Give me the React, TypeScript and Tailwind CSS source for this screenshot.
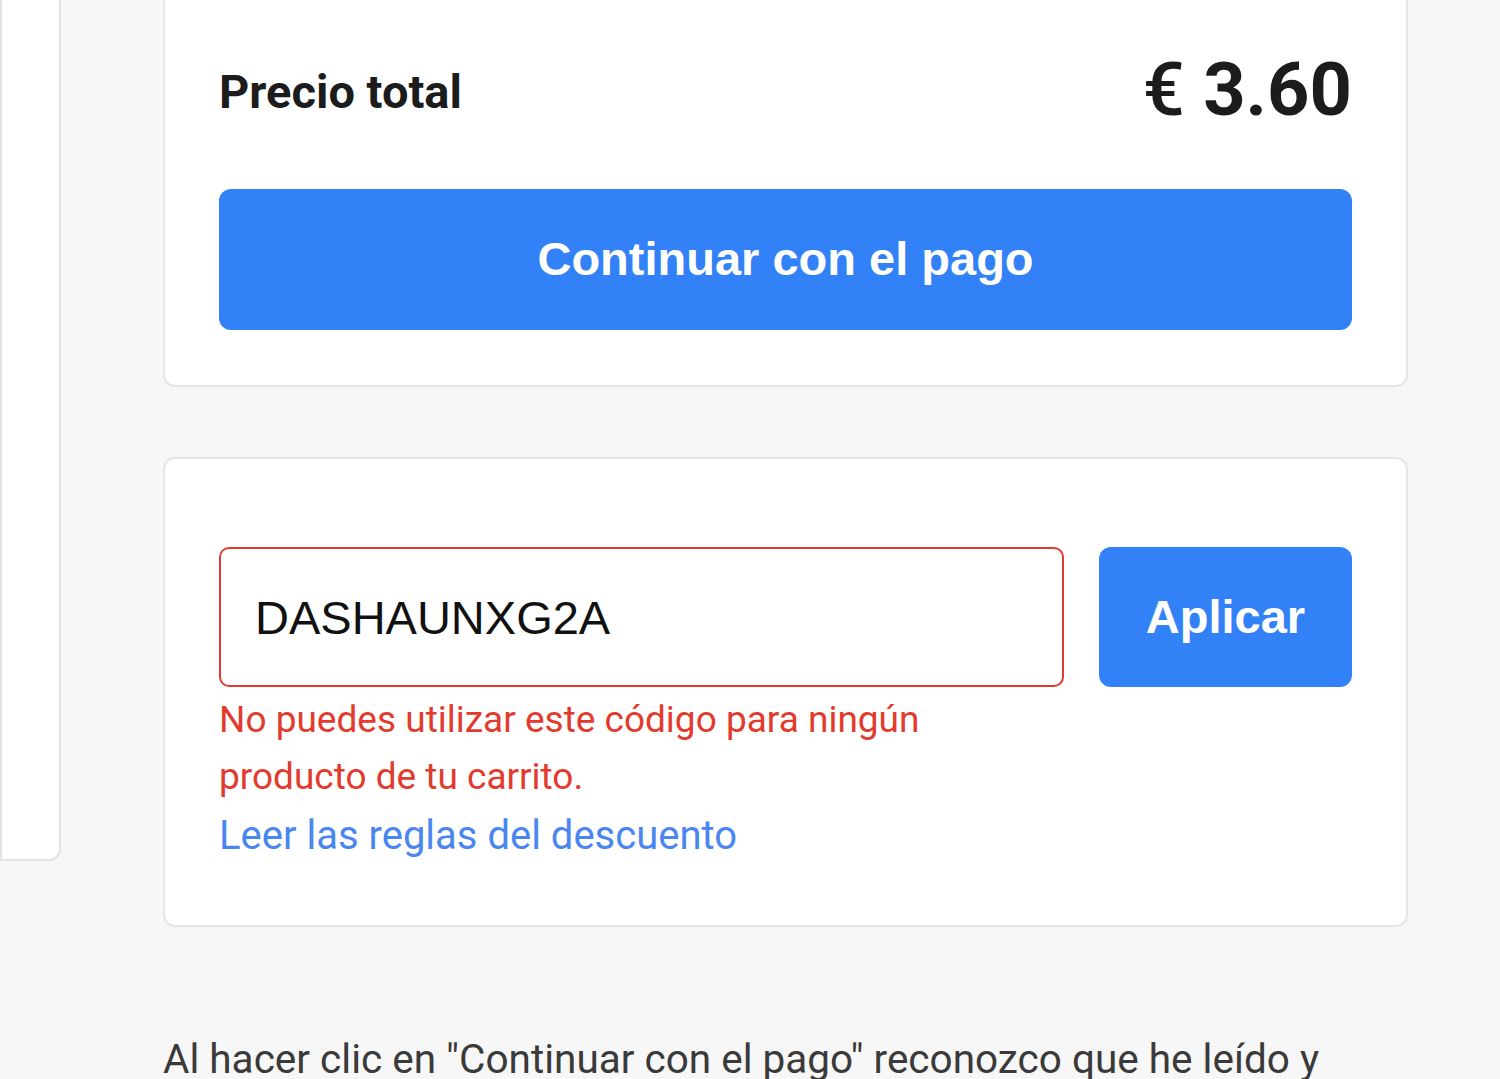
import { useState } from "react";

const roboto = "font-['Roboto','Noto_Sans',sans-serif]";
const arial = "font-['Liberation_Sans',Arial,sans-serif]";

export default function App() {
  const [code, setCode] = useState("DASHAUNXG2A");

  return (
    <div className="h-[1079px] w-[1500px] overflow-hidden bg-[#f7f7f7]">
      <div className="flex items-start">
        {/* left summary panel, mostly off-screen */}
        <div className="h-[861px] w-[61px] shrink-0 rounded-br-[12px] border-2 border-t-0 border-[#e4e4e4] bg-white" />

        <div className="ml-[102px] w-[1245px] shrink-0">
          {/* total */}
          <div className="rounded-b-[12px] border-2 border-t-0 border-[#e6e6e6] bg-white px-[54px] pb-[55px] pt-[50px]">
            <div className="flex h-[80px] items-center justify-between">
              <span className={`${roboto} pt-[4px] text-[47px] font-bold text-[#1c1c1c]`}>
                Precio total
              </span>
              <span className={`${roboto} text-[74px] font-bold leading-none text-[#1c1c1c]`}>
                <span className="font-medium">€</span> 3.60
              </span>
            </div>
            <button
              type="button"
              className={`${arial} mt-[59px] flex h-[141px] w-full items-center justify-center rounded-[12px] bg-[#3381f7] text-[47px] font-bold text-white`}
            >
              Continuar con el pago
            </button>
          </div>

          {/* discount code */}
          <div className="mt-[70px] rounded-[12px] border-2 border-[#e6e6e6] bg-white px-[54px] pb-[61px] pt-[88px]">
            <div className="flex gap-[35px]">
              <div className="min-w-0 flex-1">
                <input
                  value={code}
                  onChange={(e) => setCode(e.target.value)}
                  className={`${arial} block h-[140px] w-full rounded-[10px] border-2 border-[#e23a2c] bg-white pl-[34px] text-[47px] text-[#111] outline-none`}
                />
                <p className={`${roboto} mt-[4px] text-[37px] leading-[57px] text-[#e23b2e]`}>
                  No puedes utilizar este código para ningún producto de tu carrito.
                </p>
                <a href="#" className={`${roboto} mt-[2px] block text-[40px] leading-[57px] text-[#4a86f0]`}>
                  Leer las reglas del descuento
                </a>
              </div>
              <button
                type="button"
                className={`${arial} h-[140px] w-[253px] shrink-0 rounded-[12px] bg-[#3381f7] text-[47px] font-bold text-white`}
              >
                Aplicar
              </button>
            </div>
          </div>

          <p className={`${roboto} mt-[104px] text-[40.5px] leading-[57px] text-[#3a3a3a]`}>
            Al hacer clic en "Continuar con el pago" reconozco que he leído y acepto los Términos y condiciones y la Política de privacidad.
          </p>
        </div>
      </div>
    </div>
  );
}
